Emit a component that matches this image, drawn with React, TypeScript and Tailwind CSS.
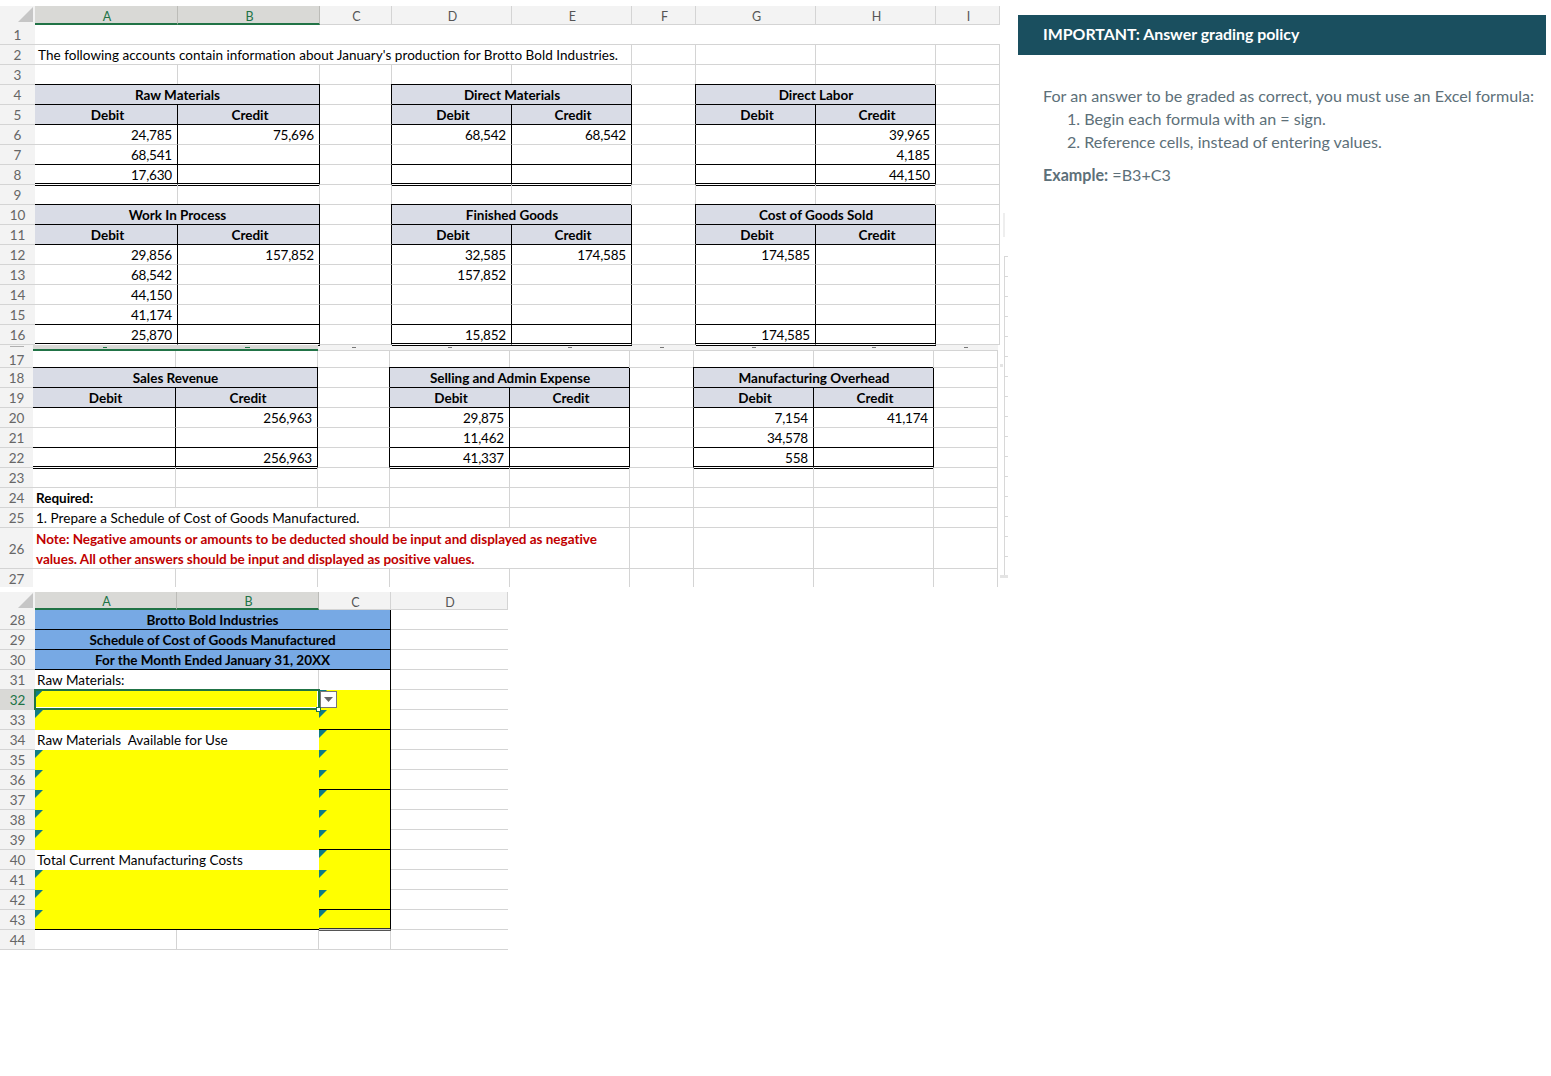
import React from 'react';

const CALIBRI = 'font-["Lato","Carlito","Liberation_Sans",sans-serif] text-[13.5px] tracking-[0.04px]';
const GRID = 'border-r border-b border-[#d4d4d4]';
const LABEL = 'flex items-center justify-center pt-[2px] border-b border-[#d4d4d4] bg-[#f3f3f3] text-[#666666]';
const HEAD = 'flex items-center justify-center pl-[2px] pt-[5px] border-r border-[#d4d4d4] text-[#555555] text-[12.5px]';
const TITLE = 'flex items-center justify-center pt-[2px] bg-[#d9dce6] border-r-black border-b-black font-bold tracking-[-0.02px]';
const AMOUNT = 'flex items-center justify-end pr-[5px] pt-[2px] border-r-black tracking-[-0.2px]';

const COLS_TOP = 'grid w-fit grid-rows-[minmax(0,1fr)] grid-cols-[35px_143px_142px_72px_120px_120px_64px_120px_120px_64px]';
const COLS_MID = 'grid w-fit grid-rows-[minmax(0,1fr)] grid-cols-[33px_143px_142px_72px_120px_120px_64px_120px_120px_64px]';
const COLS_SCHED = 'grid w-fit grid-rows-[minmax(0,1fr)] grid-cols-[35px_142px_142px_72px_117px]';

interface Account {
  title: string;
  rows: [string, string][];
}

// one row of account tables, three side by side
const Row: React.FC<{ n: number; cols: string; children?: React.ReactNode }> = ({ n, cols, children }) => (
  <div className={`${cols} h-5`}>
    <div className={LABEL}>{n}</div>
    {children}
  </div>
);

const Blank: React.FC<{ n: number; cols: string }> = ({ n, cols }) => (
  <Row n={n} cols={cols}>
    {Array.from({ length: 9 }).map((_, i) => (
      <div key={i} className={GRID} />
    ))}
  </Row>
);

const AccountBlock: React.FC<{ start: number; cols: string; tables: Account[] }> = ({ start, cols, tables }) => {
  const count = tables[0].rows.length;
  const edge = (i: number) => (i < 2 ? `${GRID} border-r-black` : GRID);
  return (
    <>
      <Row n={start} cols={cols}>
        {tables.map((t, i) => (
          <React.Fragment key={t.title}>
            <div
              className={`${GRID} ${TITLE} col-span-2 pl-px ${
                i === 0 ? 'shadow-[0_-1px_0_#000]' : 'shadow-[-1px_-1px_0_#000]'
              }`}
            >
              {t.title}
            </div>
            <div className={edge(i)} />
          </React.Fragment>
        ))}
      </Row>
      <Row n={start + 1} cols={cols}>
        {tables.map((t, i) => (
          <React.Fragment key={t.title}>
            <div className={`${GRID} ${TITLE} pl-[3px]`}>Debit</div>
            <div className={`${GRID} ${TITLE} pl-[3px]`}>Credit</div>
            <div className={edge(i)} />
          </React.Fragment>
        ))}
      </Row>
      {Array.from({ length: count }).map((_, r) => {
        const last = r === count - 1;
        const sumLine = r === count - 2;
        // double rule under the totals: one pixel inside, one on the next row
        const line = last
          ? 'border-b-white shadow-[inset_0_-1px_0_#000,0_1px_0_#000]'
          : sumLine
            ? 'border-b-black'
            : '';
        return (
          <Row key={r} n={start + 2 + r} cols={cols}>
            {tables.map((t, i) => (
              <React.Fragment key={t.title}>
                <div className={`${GRID} ${AMOUNT} ${line}`}>{t.rows[r][0]}</div>
                <div className={`${GRID} ${AMOUNT} ${line}`}>{t.rows[r][1]}</div>
                <div className={edge(i)} />
              </React.Fragment>
            ))}
          </Row>
        );
      })}
    </>
  );
};

const ColumnHeader: React.FC<{ letters: string[]; cols: string; active: number; tall?: boolean }> = ({ letters, cols, active, tall }) => (
  <div className={`${cols} ${tall ? 'h-[19px]' : 'h-[18px]'} bg-[#f3f3f3] relative`}>
    <div className="relative">
      <svg className="absolute left-[18px] top-px" width="15" height="15" viewBox="0 0 15 15">
        <polygon points="15,0 15,15 0,15" fill="#c6c6c6" />
      </svg>
    </div>
    {letters.map((l, i) =>
      i < active ? (
        <div key={l} className="flex items-center justify-center pl-[2px] pt-[5px] border-r border-[#bcbcb8] border-b-2 border-b-[#217346] bg-[#d9d9d6] text-[#217346] text-[12.5px]">
          {l}
        </div>
      ) : (
        <div key={l} className={`${HEAD} border-b border-b-[#d4d4d4]`}>
          {l}
        </div>
      ),
    )}
  </div>
);

const Flag: React.FC = () => (
  <svg className="absolute left-0 top-0" width="8" height="8" viewBox="0 0 8 8">
    <polygon points="0,0 8,0 0,8" fill="#0e7c86" />
  </svg>
);

const topTables: Account[] = [
  { title: 'Raw Materials', rows: [['24,785', '75,696'], ['68,541', ''], ['17,630', '']] },
  { title: 'Direct Materials', rows: [['68,542', '68,542'], ['', ''], ['', '']] },
  { title: 'Direct Labor', rows: [['', '39,965'], ['', '4,185'], ['', '44,150']] },
];

const wipTables: Account[] = [
  { title: 'Work In Process', rows: [['29,856', '157,852'], ['68,542', ''], ['44,150', ''], ['41,174', ''], ['25,870', '']] },
  { title: 'Finished Goods', rows: [['32,585', '174,585'], ['157,852', ''], ['', ''], ['', ''], ['15,852', '']] },
  { title: 'Cost of Goods Sold', rows: [['174,585', ''], ['', ''], ['', ''], ['', ''], ['174,585', '']] },
];

const salesTables: Account[] = [
  { title: 'Sales Revenue', rows: [['', '256,963'], ['', ''], ['', '256,963']] },
  { title: 'Selling and Admin Expense', rows: [['29,875', ''], ['11,462', ''], ['41,337', '']] },
  { title: 'Manufacturing Overhead', rows: [['7,154', '41,174'], ['34,578', ''], ['558', '']] },
];

const LETTERS = ['A', 'B', 'C', 'D', 'E', 'F', 'G', 'H', 'I'];

const TopSheet: React.FC = () => (
  <div>
    <ColumnHeader letters={LETTERS} cols={COLS_TOP} active={2} tall />
    <Row n={1} cols={COLS_TOP}>
      <div className="col-span-9 border-b border-[#d4d4d4]" />
    </Row>
    <Row n={2} cols={COLS_TOP}>
      <div className={`${GRID} col-span-5 flex items-center pl-[3px] pt-[2px]`}>
        The following accounts contain information about January's production for Brotto Bold Industries.
      </div>
      <div className={GRID} />
      <div className={GRID} />
      <div className={GRID} />
      <div className={GRID} />
    </Row>
    <Blank n={3} cols={COLS_TOP} />
    <AccountBlock start={4} cols={COLS_TOP} tables={topTables} />
    <Blank n={9} cols={COLS_TOP} />
    <AccountBlock start={10} cols={COLS_TOP} tables={wipTables} />
  </div>
);

// the sliver of a hidden header left between the first two pictures
const HeaderSliver: React.FC = () => (
  <div className={`${COLS_MID} h-[6px] bg-[#f3f3f3]`}>
    <div className="flex justify-center pt-px">
      <div className="h-px w-[14px] bg-[#b0b0b0]" />
    </div>
    <div className="flex justify-center border-b-2 border-[#217346] bg-[#d9d9d6]">
      <div className="mt-[2px] h-px w-[4px] bg-[#217346]" />
    </div>
    <div className="flex justify-center border-b-2 border-[#217346] bg-[#d9d9d6]">
      <div className="mt-[2px] h-px w-[5px] bg-[#217346]" />
    </div>
    {LETTERS.slice(2).map((l) => (
      <div key={l} className="flex justify-center border-b border-[#d4d4d4]">
        <div className="mt-[2px] h-px w-[4px] bg-[#777777]" />
      </div>
    ))}
  </div>
);

const MiddleSheet: React.FC = () => (
  <div>
    <HeaderSliver />
    <div className={`${COLS_MID} h-[17px]`}>
      <div className={LABEL}>17</div>
      {Array.from({ length: 9 }).map((_, i) => (
        <div key={i} className={GRID} />
      ))}
    </div>
    <AccountBlock start={18} cols={COLS_MID} tables={salesTables} />
    <Blank n={23} cols={COLS_MID} />
    <Row n={24} cols={COLS_MID}>
      <div className={`${GRID} flex items-center pl-[3px] pt-[2px] font-bold tracking-[-0.02px] whitespace-nowrap`}>Required:</div>
      {Array.from({ length: 8 }).map((_, i) => (
        <div key={i} className={GRID} />
      ))}
    </Row>
    <Row n={25} cols={COLS_MID}>
      <div className={`${GRID} col-span-3 flex items-center pl-[3px] pt-[2px]`}>1. Prepare a Schedule of Cost of Goods Manufactured.</div>
      {Array.from({ length: 6 }).map((_, i) => (
        <div key={i} className={GRID} />
      ))}
    </Row>
    <div className={`${COLS_MID} h-[41px]`}>
      <div className={LABEL}>26</div>
      <div className={`${GRID} col-span-5 pl-[3px] pt-px font-bold tracking-[-0.02px] text-[#c00000] leading-5`}>
        Note: Negative amounts or amounts to be deducted should be input and displayed as negative
        <br />
        values. All other answers should be input and displayed as positive values.
      </div>
      <div className={GRID} />
      <div className={GRID} />
      <div className={GRID} />
      <div className={GRID} />
    </div>
    <div className={`${COLS_MID} h-[18px]`}>
      <div className="flex items-center justify-center pt-[2px] bg-[#f3f3f3] text-[#666666]">27</div>
      {Array.from({ length: 9 }).map((_, i) => (
        <div key={i} className="border-r border-[#d4d4d4]" />
      ))}
    </div>
  </div>
);

const SchedRow: React.FC<{
  n: number;
  a?: string;
  yellow?: boolean;
  flagA?: boolean;
  flagC?: boolean;
  lineC?: boolean;
  children?: React.ReactNode;
  active?: boolean;
}> = ({ n, a, yellow, flagA, flagC, lineC, children, active }) => (
  <div className={`${COLS_SCHED} h-5`}>
    <div className={active ? 'flex items-center justify-center pt-px bg-[#d9d9d6] text-[#217346]' : LABEL}>{n}</div>
    <div className={`relative col-span-2 flex items-center pl-[2px] whitespace-pre ${yellow ? 'bg-[#ffff00]' : 'pt-[2px] border-b border-[#ffffff]'}`}>
      {flagA && <Flag />}
      {a}
      {children}
    </div>
    <div className={`relative border-r border-r-black bg-[#ffff00] ${lineC ? 'border-b border-b-black' : ''}`}>{flagC && <Flag />}</div>
    <div className="border-b border-[#d4d4d4]" />
  </div>
);

const Schedule: React.FC = () => (
  <div className="mt-[5px]">
    <ColumnHeader letters={['A', 'B', 'C', 'D']} cols={COLS_SCHED} active={2} />
    {['Brotto Bold Industries', 'Schedule of Cost of Goods Manufactured', 'For the Month Ended January 31, 20XX'].map((t, i) => (
      <div key={t} className={`${COLS_SCHED} h-5`}>
        <div className={LABEL}>{28 + i}</div>
        <div className="col-span-3 flex items-center justify-center pt-[2px] border-r border-b border-r-black border-b-black bg-[#77a9e4] font-bold tracking-[-0.02px]">{t}</div>
        <div className="border-b border-[#d4d4d4]" />
      </div>
    ))}
    <div className={`${COLS_SCHED} h-5`}>
      <div className={LABEL}>31</div>
      <div className="col-span-2 flex items-center border-r border-[#d4d4d4] pl-[2px]">Raw Materials:</div>
      <div className="border-r border-black" />
      <div className="border-b border-[#d4d4d4]" />
    </div>
    <SchedRow n={32} yellow flagA flagC active>
      <div className="absolute -inset-x-px -top-px bottom-0 z-10 border-2 border-[#217346] shadow-[inset_0_-1px_0_#fff,inset_-1px_0_0_#fff]" />
      <div className="absolute -right-[18px] top-px z-10 flex h-[17px] w-[17px] items-center justify-center border border-[#777777] bg-white">
        <svg width="9" height="5" viewBox="0 0 9 5">
          <polygon points="0,0 9,0 4.5,5" fill="#666666" />
        </svg>
      </div>
      <div className="absolute -bottom-[2px] -right-[2px] z-20 h-[5px] w-[5px] border border-[#217346] bg-white" />
      <Flag />
    </SchedRow>
    <SchedRow n={33} yellow flagA flagC lineC />
    <SchedRow n={34} a="Raw Materials  Available for Use" flagC />
    <SchedRow n={35} yellow flagA flagC />
    <SchedRow n={36} yellow flagA flagC lineC />
    <SchedRow n={37} yellow flagA flagC />
    <SchedRow n={38} yellow flagA flagC />
    <SchedRow n={39} yellow flagA flagC lineC />
    <SchedRow n={40} a="Total Current Manufacturing Costs" flagC />
    <SchedRow n={41} yellow flagA flagC />
    <SchedRow n={42} yellow flagA flagC lineC />
    <div className={`${COLS_SCHED} h-5`}>
      <div className={LABEL}>43</div>
      <div className="relative col-span-2 border-b border-black bg-[#ffff00]">
        <Flag />
      </div>
      <div className="relative border-r border-b border-r-black border-b-[#cccccc] bg-[#ffff00] shadow-[inset_0_-1px_0_#333,0_1px_0_#555]">
        <Flag />
      </div>
      <div className="border-b border-[#d4d4d4]" />
    </div>
    <div className={`${COLS_SCHED} h-5`}>
      <div className={LABEL}>44</div>
      <div className={GRID} />
      <div className={GRID} />
      <div className={GRID} />
      <div className="border-b border-[#d4d4d4]" />
    </div>
  </div>
);

// stray frozen-pane ruler that shows beside the pictures
const RulerMarks: React.FC = () => (
  <svg className="absolute left-[1000px] top-[210px]" width="10" height="380" viewBox="0 0 10 380">
    <rect x="3" y="3" width="2" height="24" fill="#eeeeee" />
    <line x1="4.5" y1="46" x2="4.5" y2="367" stroke="#d8d8d8" />
    {Array.from({ length: 17 }).map((_, i) => (
      <line key={i} x1="4" x2="8" y1={46.5 + i * 20} y2={46.5 + i * 20} stroke="#d8d8d8" />
    ))}
    <rect x="0" y="154" width="3" height="3" fill="#e4e4e4" />
    <rect x="0" y="365" width="8" height="3" fill="#e4e4e4" />
  </svg>
);

const PolicyPanel: React.FC = () => (
  <aside className="w-[528px] pt-[15px] font-['Lato',sans-serif] text-[16.1px] text-[#5d7079]">
    <div className="flex h-10 items-center bg-[#1a4f5f] pb-[2px] pl-[25px] text-[15.9px] font-bold text-white">IMPORTANT: Answer grading policy</div>
    <div className="pl-[25px] pt-[29px]">
      <p className="leading-[23px]">For an answer to be graded as correct, you must use an Excel formula:</p>
      <ol className="pl-6 leading-[23px]">
        <li>1. Begin each formula with an = sign.</li>
        <li>2. Reference cells, instead of entering values.</li>
      </ol>
      <p className="mt-[10px] leading-[23px]">
        <span className="font-bold">Example:</span> =B3+C3
      </p>
    </div>
  </aside>
);

export default function App() {
  return (
    <div className="relative flex min-h-[1076px] w-[1551px] bg-white text-black">
      <main className={`w-[1018px] pt-[6px] ${CALIBRI}`}>
        <TopSheet />
        <MiddleSheet />
        <Schedule />
      </main>
      <RulerMarks />
      <PolicyPanel />
    </div>
  );
}
